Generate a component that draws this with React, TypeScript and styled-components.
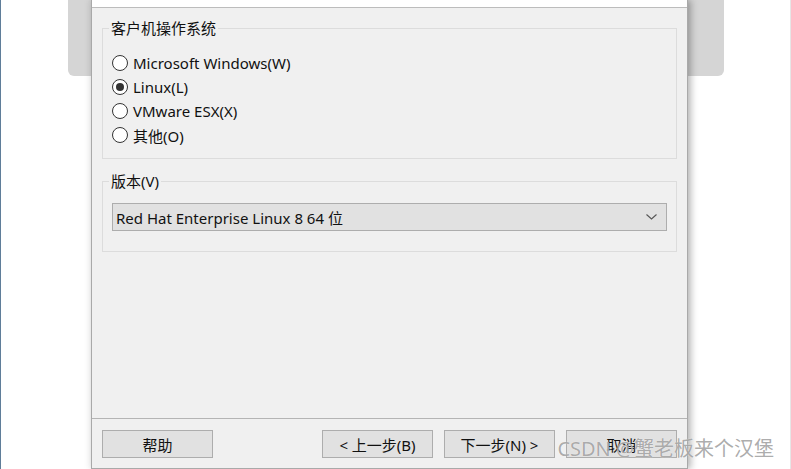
import React from 'react';
import styled, { createGlobalStyle } from 'styled-components';

const GlobalStyle = createGlobalStyle`
  html, body { margin: 0; padding: 0; background: #fff; }
  body { font-family: "Noto Sans", "Noto Sans CJK SC", sans-serif; color: #000; }
  #root { width: 791px; height: 469px; }
`;

const Desktop = styled.div`
  position: relative;
  width: 791px;
  height: 469px;
  overflow: hidden;
  background: #fff;
  border-left: 1px solid #5f7d99;
  border-right: 1px solid #e6e6e6;
  box-sizing: border-box;
`;

const BackWindow = styled.div`
  position: absolute;
  left: 67px;
  top: -10px;
  width: 656px;
  height: 86px;
  background: #d5d5d5;
  border-radius: 0 0 6px 6px;
`;

const Dialog = styled.section`
  position: absolute;
  left: 90px;
  top: 0;
  width: 597px;
  height: 469px;
  box-sizing: border-box;
  display: flex;
  flex-direction: column;
  background: #f0f0f0;
  border: 1px solid #a9a9a9;
  border-top: none;
  box-shadow: 3px 0 7px rgba(0, 0, 0, 0.28), -2px 0 7px rgba(0, 0, 0, 0.06);
`;

const Header = styled.div`
  height: 7px;
  background: #fff;
  border-bottom: 1px solid #bcbcbc;
  flex: none;
`;

const Body = styled.div`
  flex: 1;
  padding: 11px 10px 0;
  display: flex;
  flex-direction: column;
`;

const Group = styled.fieldset<{ $gap?: number }>`
  margin: ${p => p.$gap ?? 0}px 0 0;
  padding: 0;
  border: 1px solid #dcdcdc;
  min-width: 0;
`;

const Legend = styled.legend`
  margin-left: 6px;
  padding: 0 2px;
  font-size: 15px;
  line-height: 18px;
  color: #111;
`;

const RadioList = styled.div`
  display: flex;
  flex-direction: column;
  padding: 14px 9px 11px;
`;

const RadioRow = styled.label`
  display: flex;
  align-items: center;
  height: 24px;
  font-size: 15px;
  color: #111;
`;

const RadioCircle = styled.span<{ $checked?: boolean }>`
  width: 16px;
  height: 16px;
  box-sizing: border-box;
  border: 1px solid #333;
  border-radius: 50%;
  background: #fff;
  display: flex;
  align-items: center;
  justify-content: center;
  margin-right: 5px;
  flex: none;
  &::after {
    content: '';
    width: 8px;
    height: 8px;
    border-radius: 50%;
    background: #333;
    display: ${p => (p.$checked ? 'block' : 'none')};
  }
`;

const SelectArea = styled.div`
  padding: 13px 9px 20px;
`;

const Select = styled.div`
  height: 28px;
  box-sizing: border-box;
  border: 1px solid #adadad;
  background: #e1e1e1;
  display: flex;
  align-items: center;
  justify-content: space-between;
  padding: 0 9px 0 3px;
  font-size: 15px;
  color: #111;
`;

const Footer = styled.div`
  flex: none;
  border-top: 1px solid #b4b4b4;
  padding: 11px 10px 10px;
  display: flex;
  align-items: center;
  gap: 11px;
`;

const Button = styled.div<{ $push?: boolean }>`
  width: 111px;
  height: 28px;
  box-sizing: border-box;
  border: 1px solid #adadad;
  background: #e1e1e1;
  display: flex;
  align-items: center;
  justify-content: center;
  font-size: 15px;
  color: #111;
  margin-left: ${p => (p.$push ? 'auto' : '0')};
`;

const Watermark = styled.div`
  position: absolute;
  right: 16px;
  top: 435px;
  font-size: 20px;
  line-height: 28px;
  color: rgba(125, 125, 125, 0.65);
  text-shadow: 0 0 1px rgba(255, 255, 255, 0.9);
  white-space: nowrap;
  font-family: "Noto Sans", "Noto Sans CJK SC", sans-serif;
`;

const Chevron = () => (
  <svg width="11" height="6" viewBox="0 0 11 6" fill="none">
    <path d="M0.5 0.5 L5.5 5 L10.5 0.5" stroke="#555" strokeWidth="1.1" />
  </svg>
);

const options = [
  { label: 'Microsoft Windows(W)', checked: false },
  { label: 'Linux(L)', checked: true },
  { label: 'VMware ESX(X)', checked: false },
  { label: '其他(O)', checked: false },
];

export default function App() {
  return (
    <>
      <GlobalStyle />
      <Desktop>
        <BackWindow />
        <Dialog>
          <Header />
          <Body>
            <Group>
              <Legend>客户机操作系统</Legend>
              <RadioList>
                {options.map(o => (
                  <RadioRow key={o.label}>
                    <RadioCircle $checked={o.checked} />
                    {o.label}
                  </RadioRow>
                ))}
              </RadioList>
            </Group>
            <Group $gap={13}>
              <Legend>版本(V)</Legend>
              <SelectArea>
                <Select>
                  <span>Red Hat Enterprise Linux 8 64 位</span>
                  <Chevron />
                </Select>
              </SelectArea>
            </Group>
          </Body>
          <Footer>
            <Button>帮助</Button>
            <Button $push>&lt; 上一步(B)</Button>
            <Button>下一步(N) &gt;</Button>
            <Button>取消</Button>
          </Footer>
        </Dialog>
        <Watermark>CSDN @蟹老板来个汉堡</Watermark>
      </Desktop>
    </>
  );
}
